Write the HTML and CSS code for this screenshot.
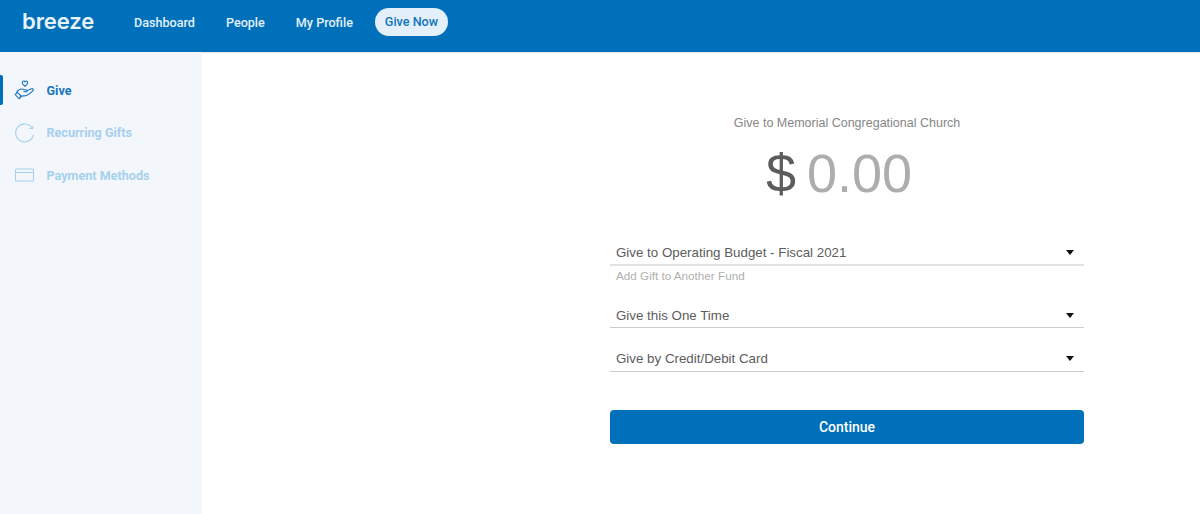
FILE: index.html
```html
<!DOCTYPE html>
<html>
	<head>
		<meta charset="UTF-8">
		<title>Give</title>
		<link rel="stylesheet" href="styles.css">
	</head>
	<body>
		<div id="top_bar">
			<div class="logo">breeze</div>
			<a class="top_link">Dashboard</a>
			<a class="top_link">People</a>
			<a class="top_link">My Profile</a>
			<a class="top_link active">Give Now</a>
		</div>
		<div id="main">
			<div id="side_bar">
				<div class="side_item active">
					<svg width="22" height="22" viewBox="0 0 22 22" fill="none" stroke="currentColor" stroke-width="1.1">
						<path d="M11 7.2C9.4 6 8.2 5 8.2 3.6C8.2 1.8 10.3 1.4 11 2.8C11.7 1.4 13.8 1.8 13.8 3.6C13.8 5 12.6 6 11 7.2Z"/>
						<path d="M2.5 13.5C4 11 6.5 9.6 9 10.2L12.5 11C13.6 11.4 13.2 13 12 12.8L9.5 12.4"/>
						<path d="M12.5 11.8L17.5 9.8C19 9.3 20 10.8 18.8 11.9C16.8 14 14.6 15.8 12.4 16.6C10.4 17.3 8.8 16.5 7.2 17.2L5.4 18.6"/>
						<path d="M1.2 15.6L3.2 13.4L7.4 17.4L5.2 19.8Z"/>
					</svg>
					<span>Give</span>
				</div>
				<div class="side_item">
					<svg width="22" height="22" viewBox="0 0 22 22" fill="none" stroke="currentColor" stroke-width="1.1">
						<path d="M18.2 6A9 9 0 1 0 19.4 13"/>
						<path d="M19 3.8L18.4 6.6L15.4 6.2"/>
					</svg>
					<span>Recurring Gifts</span>
				</div>
				<div class="side_item">
					<svg width="22" height="22" viewBox="0 0 22 22" fill="none" stroke="currentColor" stroke-width="1.1">
						<rect x="1.5" y="5" width="18" height="12" rx="1"/>
						<path d="M1.5 8.5H19.5"/>
					</svg>
					<span>Payment Methods</span>
				</div>
			</div>
			<div id="content">
				<div id="give_box">
					<div class="give_title">Give to Memorial Congregational Church</div>
					<div class="amount"><span class="dollar">$</span> 0.00</div>
					<div class="select_row first"><span>Give to Operating Budget - Fiscal 2021</span><i class="arrow"></i></div>
					<div class="add_fund">Add Gift to Another Fund</div>
					<div class="select_row second"><span>Give this One Time</span><i class="arrow"></i></div>
					<div class="select_row third"><span>Give by Credit/Debit Card</span><i class="arrow"></i></div>
					<div class="continue_btn">Continue</div>
				</div>
			</div>
		</div>
	</body>
</html>
```

FILE: styles.css
```css
*{margin: 0;padding: 0;box-sizing: border-box;}
html,body{height: 100%;overflow: hidden;}
body{
	font-family: "Liberation Sans", Arial, sans-serif;
	background-color: #fff;
	display: flex;
	flex-direction: column;
}
#top_bar{
	height: 52px;
	flex-shrink: 0;
	background-color: #0070bb;
	display: flex;
	align-items: center;
	padding-left: 22px;
	padding-bottom: 8px;
	box-shadow: 0 1px 1px rgba(0,0,0,0.1);
}
.logo{
	width: 112px;
	margin-top: -3px;
	color: #e8f3fb;
	font-family: Inter, sans-serif;
	font-size: 22px;
	font-weight: 600;
	letter-spacing: -0.1px;
}
.top_link{
	font-family: Roboto, sans-serif;
	font-size: 12.6px;
	font-weight: 500;
	color: #e3f0fa;
	margin-right: 31px;
}
.top_link.active{
	margin-left: -9px;
	margin-right: 0;
	width: 73px;
	height: 28px;
	line-height: 28px;
	text-align: center;
	border-radius: 14px;
	background-color: #e3f0fa;
	color: #0f75bc;
}
#main{
	flex: 1;
	display: flex;
}
#side_bar{
	width: 202px;
	background-color: #f3f7fb;
	padding-top: 17px;
}
.side_item{
	height: 42.5px;
	padding-left: 14px;
	display: flex;
	align-items: center;
	font-family: Roboto, sans-serif;
	font-size: 12.6px;
	font-weight: 700;
	color: #a6d0ec;
	position: relative;
}
.side_item span{
	margin-left: 10.5px;
}
.side_item.active{
	color: #1b76bd;
}
.side_item.active::before{
	content: "";
	position: absolute;
	left: 0;
	top: 6px;
	width: 3px;
	height: 30px;
	background-color: #0070bb;
	border-radius: 0 2px 2px 0;
}
#content{
	flex: 1;
	display: flex;
	padding-left: 408px;
}
#give_box{
	width: 474px;
	padding-top: 64px;
	color: #555;
}
.give_title{
	text-align: center;
	font-size: 12.5px;
	line-height: 15px;
	color: #858585;
}
.amount{
	margin-top: 12px;
	padding-right: 16px;
	text-align: center;
	font-size: 54px;
	line-height: 60px;
	word-spacing: -4px;
	color: #adadad;
}
.dollar{
	color: #5c5c5c;
}
.select_row{
	height: 30px;
	padding: 6px 7px 0 6px;
	display: flex;
	align-items: center;
	justify-content: space-between;
	font-size: 13.33px;
	color: #5c5c5c;
	border-bottom: 1px solid #ccc;
}
.select_row.first{
	margin-top: 32px;
	border-bottom: 2px solid #e2e2e2;
	height: 31px;
}
.select_row.second{
	margin-top: 15px;
}
.select_row.third{
	margin-top: 14px;
	padding-top: 4px;
}
.arrow{
	width: 0;
	height: 0;
	margin-right: 3px;
	border-left: 4.5px solid transparent;
	border-right: 4.5px solid transparent;
	border-top: 5px solid #111;
}
.add_fund{
	padding-left: 6px;
	margin-top: 3px;
	font-size: 11.7px;
	line-height: 14px;
	color: #b0b0b0;
}
.continue_btn{
	margin-top: 38px;
	height: 34px;
	line-height: 34px;
	text-align: center;
	background-color: #0070bb;
	border-radius: 4px;
	color: #fff;
	font-family: Roboto, sans-serif;
	font-size: 14px;
	font-weight: 500;
}
```
